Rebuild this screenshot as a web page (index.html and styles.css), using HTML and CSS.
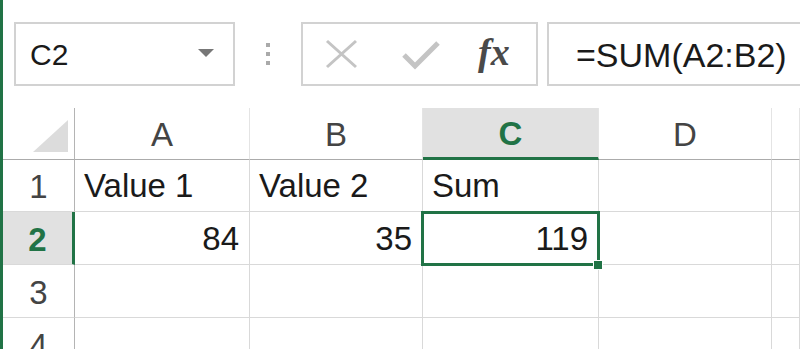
FILE: index.html
```html
<!doctype html>
<html>

<head>
    <meta charset="utf-8">
    <title>Sheet</title>
    <link rel="stylesheet" href="styles.css">
</head>

<body>
    <div class="formula-bar">
        <div class="name-box">
            <span>C2</span>
            <span class="caret"></span>
        </div>
        <div class="grip"><i></i><i></i><i></i></div>
        <div class="fx-buttons">
            <svg class="icon-cancel" width="33" height="30" viewBox="0 0 33 30">
                <path d="M2 2 L31 28 M31 2 L2 28" stroke="#c4c4c4" stroke-width="3" fill="none" />
            </svg>
            <svg class="icon-enter" width="38" height="30" viewBox="0 0 38 30">
                <polyline points="2,15 13,26 36,3" stroke="#c4c4c4" stroke-width="5" fill="none" />
            </svg>
            <span class="fx">fx</span>
        </div>
        <div class="formula">=SUM(A2:B2)</div>
    </div>

    <div class="sheet">
        <div class="cell corner"><span class="triangle"></span></div>
        <div class="cell col-head">A</div>
        <div class="cell col-head">B</div>
        <div class="cell col-head selected">C</div>
        <div class="cell col-head">D</div>
        <div class="cell col-head last"></div>

        <div class="cell row-head">1</div>
        <div class="cell">Value 1</div>
        <div class="cell">Value 2</div>
        <div class="cell">Sum</div>
        <div class="cell"></div>
        <div class="cell"></div>

        <div class="cell row-head selected">2</div>
        <div class="cell num">84</div>
        <div class="cell num">35</div>
        <div class="cell num active">119</div>
        <div class="cell"></div>
        <div class="cell"></div>

        <div class="cell row-head">3</div>
        <div class="cell"></div>
        <div class="cell"></div>
        <div class="cell"></div>
        <div class="cell"></div>
        <div class="cell"></div>

        <div class="cell row-head">4</div>
        <div class="cell"></div>
        <div class="cell"></div>
        <div class="cell"></div>
        <div class="cell"></div>
        <div class="cell"></div>
    </div>
</body>

</html>
```

FILE: styles.css
```css
* {
    box-sizing: border-box;
}

body {
    margin: 0;
    height: 349px;
    overflow: hidden;
    background: #fff;
    border-left: 3px solid #217346;
    font-family: "Liberation Sans", Arial, sans-serif;
    color: #1a1a1a;
}

/* formula bar */

.formula-bar {
    display: flex;
    padding: 22px 0 0 11px;
    height: 86px;
}

.name-box {
    width: 221px;
    border: 2px solid #d2d2d2;
    display: flex;
    align-items: center;
    justify-content: space-between;
    padding: 2px 19px 0 14px;
    font-size: 30px;
}

.caret {
    width: 0;
    height: 0;
    border-left: 8px solid transparent;
    border-right: 8px solid transparent;
    border-top: 8px solid #777;
    margin-top: -4px;
}

.grip {
    width: 66px;
    display: flex;
    flex-direction: column;
    align-items: center;
    justify-content: center;
    gap: 5px;
}

.grip i {
    width: 4px;
    height: 4px;
    background: #aaa;
}

.fx-buttons {
    width: 237px;
    border: 2px solid #d2d2d2;
    display: flex;
    align-items: center;
    padding-left: 22px;
}

.icon-enter {
    margin-left: 44px;
    margin-top: 2px;
}

.fx {
    margin-left: 38px;
    font-family: "Liberation Serif", serif;
    font-style: italic;
    font-weight: bold;
    font-size: 38px;
    color: #4a4a4a;
    margin-top: -4px;
}

.formula {
    flex: 1;
    margin-left: 9px;
    margin-right: -20px;
    border: 2px solid #d2d2d2;
    display: flex;
    align-items: center;
    padding: 2px 0 0 27px;
    font-size: 34px;
}

/* grid */

.sheet {
    margin-top: 22px;
    display: grid;
    grid-template-columns: 72px 175px 173px 176px 173px 1fr;
    grid-template-rows: 52px 52px 53px 53px 53px;
    font-size: 33px;
}

.cell {
    border-right: 1px solid #d9d9d9;
    border-bottom: 1px solid #d9d9d9;
    display: flex;
    align-items: flex-end;
    padding: 0 10px 6px 9px;
    white-space: nowrap;
}

.cell.num {
    justify-content: flex-end;
}

.corner {
    justify-content: flex-end;
    padding: 0 6px 7px 0;
    border-right-color: #b4b4b4;
    border-bottom-color: #ababab;
}

.triangle {
    width: 35px;
    height: 32px;
    background: #dcdcdc;
    clip-path: polygon(100% 0, 100% 100%, 0 100%);
}

.col-head {
    justify-content: center;
    align-items: center;
    padding: 2px 0 0;
    color: #444;
    border-right-color: #e4e4e4;
    border-bottom-color: #ababab;
}

.row-head {
    justify-content: center;
    align-items: center;
    padding: 3px 0 0;
    color: #444;
    border-right-color: #b4b4b4;
}

.col-head.selected {
    background: #e1e1e1;
    color: #217346;
    font-weight: bold;
    border-bottom: 3px solid #217346;
}

.row-head.selected {
    background: #e1e1e1;
    color: #217346;
    font-weight: bold;
    border-right: 3px solid #217346;
}

.active {
    position: relative;
}

.active::before {
    content: "";
    position: absolute;
    top: -1px;
    left: -2px;
    right: -2px;
    bottom: -2px;
    border: 3px solid #217346;
}

.active::after {
    content: "";
    position: absolute;
    right: -5px;
    bottom: -6px;
    width: 8px;
    height: 8px;
    background: #217346;
    border: 1px solid #fff;
    box-sizing: content-box;
}
```
